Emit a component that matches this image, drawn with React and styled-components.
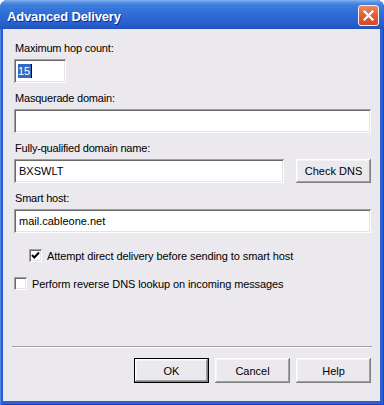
import React from "react";
import styled, { createGlobalStyle, css } from "styled-components";

const GlobalStyle = createGlobalStyle`
  html, body { margin: 0; padding: 0; background: #ffffff; }
  body { font-family: "Liberation Sans", Arial, sans-serif; font-size: 11px; }
  * { box-sizing: border-box; }
`;

const Window = styled.div`
  width: 384px;
  height: 405px;
  display: flex;
  flex-direction: column;
  border-radius: 8px 8px 0 0;
  overflow: hidden;
  background: #2a5fd6;
  box-shadow: inset 1px 0 #4f86ea, inset -1px 0 #1a46b8, inset 0 -1px #1a46b8;
`;

const TitleBar = styled.div`
  height: 29px;
  flex: none;
  display: flex;
  align-items: flex-start;
  justify-content: space-between;
  padding: 0 5px 0 7px;
  background: linear-gradient(
    to bottom,
    #8ab6f0 0px,
    #5c95e6 2px,
    #3f7ddc 5px,
    #3070d8 12px,
    #2b66d2 20px,
    #2559c6 27px,
    #1f4fba 29px
  );
`;

const TitleText = styled.div`
  margin-top: 9px;
  font-family: "Liberation Sans", Arial, sans-serif;
  font-weight: bold;
  font-size: 13px;
  line-height: 15px;
  letter-spacing: -0.15px;
  color: #ffffff;
  text-shadow: 1px 1px 0 #0c2a8c;
`;

const CloseButton = styled.div`
  margin-top: 5px;
  width: 21px;
  height: 21px;
  border: 1px solid #f4f0ee;
  border-radius: 3px;
  background: linear-gradient(to bottom, #ec8a64 0%, #e2603a 45%, #d14b25 100%);
  display: flex;
  align-items: center;
  justify-content: center;
`;

const Client = styled.div`
  flex: 1;
  margin: 0 4px 4px 3px;
  background: #ebe9ed;
  padding: 13px 9px 18px 11px;
  display: flex;
  flex-direction: column;
  color: #000000;
`;

const Field = styled.div`
  display: flex;
  flex-direction: column;
  margin-top: ${(p) => (p.$first ? 0 : 9)}px;
`;

const Label = styled.div`
  font-size: 11px;
  line-height: 13px;
  height: 13px;
  padding-left: 1px;
  letter-spacing: -0.2px;
  margin-bottom: 4px;
  white-space: nowrap;
`;

const sunken = css`
  background: #ffffff;
  box-shadow: inset 1px 1px #a0a0a0, inset -1px -1px #ffffff,
    inset 2px 2px #696969, inset -2px -2px #e3e3e3;
`;

const TextBox = styled.div`
  ${sunken};
  height: 24px;
  width: ${(p) => (p.$width ? `${p.$width}px` : "auto")};
  align-self: ${(p) => (p.$width ? "flex-start" : "stretch")};
  flex: ${(p) => (p.$grow ? "1 1 auto" : "none")};
  display: flex;
  align-items: center;
  padding: 0 3px 0 5px;
  font-size: 11px;
  line-height: 13px;
  white-space: nowrap;
`;

const Selected = styled.span`
  background: #316ac5;
  color: #ffffff;
  height: 14px;
  line-height: 14px;
  padding: 0 1px 0 0;
  margin-left: -1px;
`;

const Caret = styled.span`
  display: inline-block;
  width: 1px;
  height: 14px;
  background: #000000;
`;

const Row = styled.div`
  display: flex;
  gap: 12px;
`;

const Button = styled.div`
  width: 75px;
  height: ${(p) => (p.$height ? p.$height : 25)}px;
  flex: none;
  display: flex;
  align-items: center;
  justify-content: center;
  font-size: 11px;
  background: #ebe9ed;
  box-shadow: inset -1px -1px #808080, inset 1px 1px #ffffff,
    inset -2px -2px #a0a0a0, inset 2px 2px #f4f3f5;
  ${(p) =>
    p.$default &&
    css`
      border: 1px solid #000000;
    `}
`;

const CheckRow = styled.div`
  display: flex;
  align-items: center;
  gap: 5px;
  height: 13px;
  padding-left: ${(p) => p.$indent || 0}px;
  margin-top: ${(p) => p.$top}px;
  font-size: 11px;
  letter-spacing: -0.1px;
  white-space: nowrap;
`;

const Box = styled.div`
  ${sunken};
  width: 13px;
  height: 13px;
  flex: none;
  display: flex;
  align-items: center;
  justify-content: center;
`;

const Separator = styled.div`
  margin: 56px -1px 0 -2px;
  height: 2px;
  border-top: 1px solid #a0a0a0;
  border-bottom: 1px solid #ffffff;
`;

const ButtonRow = styled.div`
  display: flex;
  justify-content: flex-end;
  gap: 6px;
  margin-top: 10px;
`;

function Check() {
  return (
    <svg width="9" height="9" viewBox="0 0 9 9">
      <polyline points="1,4 3.3,6.5 8,1.5" fill="none" stroke="#000" strokeWidth="2" />
    </svg>
  );
}

export default function App() {
  return (
    <>
      <GlobalStyle />
      <Window>
        <TitleBar>
          <TitleText>Advanced Delivery</TitleText>
          <CloseButton>
            <svg width="11" height="11" viewBox="0 0 11 11">
              <path d="M1.5 1.5 L9.5 9.5 M9.5 1.5 L1.5 9.5" stroke="#fff" strokeWidth="2.2" strokeLinecap="square" />
            </svg>
          </CloseButton>
        </TitleBar>
        <Client>
          <Field $first>
            <Label>Maximum hop count:</Label>
            <TextBox $width={52}>
              <Selected>15</Selected>
              <Caret />
            </TextBox>
          </Field>
          <Field>
            <Label>Masquerade domain:</Label>
            <TextBox />
          </Field>
          <Field>
            <Label>Fully-qualified domain name:</Label>
            <Row>
              <TextBox $grow>BXSWLT</TextBox>
              <Button $height={24}>Check DNS</Button>
            </Row>
          </Field>
          <Field>
            <Label>Smart host:</Label>
            <TextBox>mail.cableone.net</TextBox>
          </Field>
          <CheckRow $indent={15} $top={16}>
            <Box>
              <Check />
            </Box>
            Attempt direct delivery before sending to smart host
          </CheckRow>
          <CheckRow $top={15}>
            <Box />
            Perform reverse DNS lookup on incoming messages
          </CheckRow>
          <Separator />
          <ButtonRow>
            <Button $default>OK</Button>
            <Button>Cancel</Button>
            <Button>Help</Button>
          </ButtonRow>
        </Client>
      </Window>
    </>
  );
}
